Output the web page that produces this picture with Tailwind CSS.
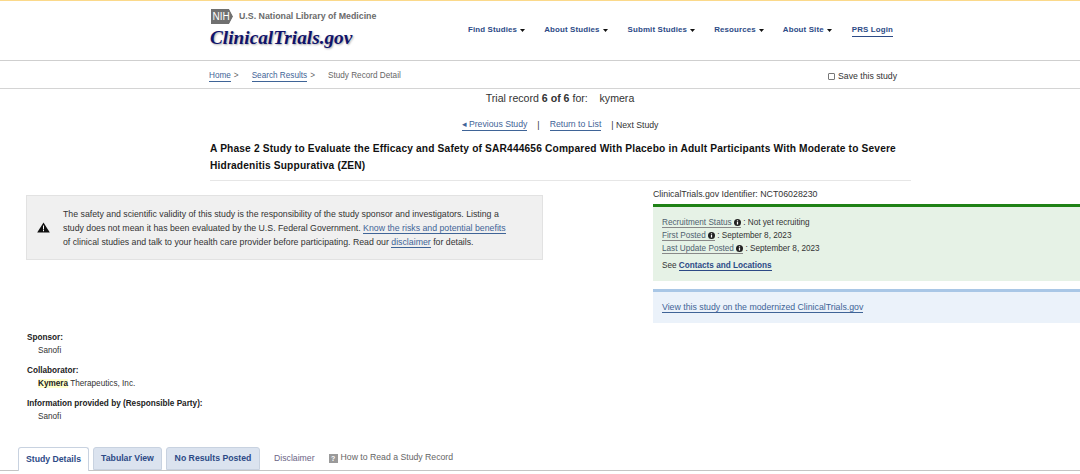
<!DOCTYPE html>
<html lang="en">
<head>
  <meta charset="UTF-8" />
  <title>ClinicalTrials.gov</title>
  <script src="https://cdn.jsdelivr.net/npm/@tailwindcss/browser@4"></script>
</head>
<body class="bg-white h-[474px] overflow-hidden font-['Liberation_Sans',Arial,sans-serif] text-[#333]">

  <!-- Header -->
  <header class="h-[61px] border-t-[1px] border-b border-t-[#fbd98a] border-b-[#cfcfcf] flex pl-[210px]">
    <div class="w-[258px] pt-[8px]">
      <div class="flex items-center h-[15px]">
        <svg width="24" height="15" viewBox="0 0 24 15">
          <path d="M1 0H19L23 7.5L19 15H1Z" fill="#707070"/>
          <path d="M19.8 0L23.8 7.5L19.8 15" fill="none" stroke="#fff" stroke-width="0.8"/>
          <text x="2.5" y="11.3" font-size="10" fill="#fff" font-family="Liberation Sans">NIH</text>
        </svg>
        <span class="ml-[5px] text-[8.8px] font-bold text-[#6b6b6b]">U.S. National Library of Medicine</span>
      </div>
      <div class="mt-[1px] font-['Liberation_Serif',serif] italic font-bold text-[19.3px] leading-[26px] text-[#10136b] [text-shadow:1px_1px_2px_#aaa]">ClinicalTrials.gov</div>
    </div>
    <nav class="flex items-start pt-[23px] text-[7.9px] leading-[12px] font-bold text-[#2c4a86] tracking-[0.15px]">
      <span class="flex items-center h-[12px]">Find Studies<svg class="ml-[3px]" width="5" height="3" viewBox="0 0 5 3"><path d="M0 0H5L2.5 3Z" fill="#111"/></svg></span>
      <span class="flex items-center h-[12px] ml-[19px]">About Studies<svg class="ml-[3px]" width="5" height="3" viewBox="0 0 5 3"><path d="M0 0H5L2.5 3Z" fill="#111"/></svg></span>
      <span class="flex items-center h-[12px] ml-[20px]">Submit Studies<svg class="ml-[3px]" width="5" height="3" viewBox="0 0 5 3"><path d="M0 0H5L2.5 3Z" fill="#111"/></svg></span>
      <span class="flex items-center h-[12px] ml-[19px]">Resources<svg class="ml-[3px]" width="5" height="3" viewBox="0 0 5 3"><path d="M0 0H5L2.5 3Z" fill="#111"/></svg></span>
      <span class="flex items-center h-[12px] ml-[19px]">About Site<svg class="ml-[3px]" width="5" height="3" viewBox="0 0 5 3"><path d="M0 0H5L2.5 3Z" fill="#111"/></svg></span>
      <a class="ml-[20px] border-b border-[#2c4a86]">PRS Login</a>
    </nav>
  </header>

  <!-- Breadcrumb -->
  <div class="h-[28px] pt-[4px] border-b border-[#d4d4d4] flex items-center pl-[209px] pr-[183px] text-[8.2px] text-[#666]">
    <a class="text-[#3f6497] border-b border-[#3f6497] leading-[10px]">Home</a><span class="ml-[3px]">&gt;</span>
    <a class="ml-[13px] text-[#3f6497] border-b border-[#3f6497] leading-[10px]">Search Results</a><span class="ml-[3px]">&gt;</span>
    <span class="ml-[13px]">Study Record Detail</span>
    <label class="ml-auto flex items-center text-[8.7px] text-[#333]">
      <span class="w-[7px] h-[7px] border border-[#777] rounded-[1px] mr-[3px]"></span>Save this study
    </label>
  </div>

  <!-- Record heading -->
  <p class="mt-[2px] text-center text-[10.6px] leading-[14px] pl-[40px]">Trial record <b>6 of 6</b> for: &nbsp; &nbsp;kymera</p>
  <div class="mt-[14px] flex justify-center pl-[40px] text-[8.7px] leading-[12px]">
    <a class="text-[#3f6497] border-b border-[#3f6497] leading-[10px]">◂ Previous Study</a>
    <span class="ml-[10px]">|</span>
    <a class="ml-[10px] text-[#3f6497] border-b border-[#3f6497] leading-[10px]">Return to List</a>
    <span class="ml-[10px]">| Next Study</span>
  </div>
  <h1 class="mt-[9px] mx-[210px] w-[701px] pb-[6px] border-b border-[#e6e6e6] text-[10.2px] leading-[17px] font-bold text-[#111] tracking-[0.16px]">A Phase 2 Study to Evaluate the Efficacy and Safety of SAR444656 Compared With Placebo in Adult Participants With Moderate to Severe Hidradenitis Suppurativa (ZEN)</h1>

  <!-- Two columns -->
  <div class="flex mt-[7px]">
    <div class="ml-[26px] w-[517px] mt-[7px]">
      <div class="h-[65px] bg-[#f0f0f0] border border-[#e2e2e2] flex items-center text-[8.75px] leading-[14px]">
        <svg class="ml-[10px] shrink-0" width="13" height="11" viewBox="0 0 13 11"><path d="M6.5 0.5L12.8 10.6H0.2Z" fill="#111"/><path d="M6 3.6h1v3.8H6zM6 8.1h1v1.1H6z" fill="#fff"/></svg>
        <p class="ml-[13px] w-[446px]">The safety and scientific validity of this study is the responsibility of the study sponsor and investigators. Listing a study does not mean it has been evaluated by the U.S. Federal Government. <a class="text-[#3f6497] border-b border-[#3f6497]">Know the risks and potential benefits</a> of clinical studies and talk to your health care provider before participating. Read our <a class="text-[#3f6497] border-b border-[#3f6497]">disclaimer</a> for details.</p>
      </div>
    </div>
    <div class="ml-[110px] flex-1">
      <p class="text-[8.8px] leading-[12px]">ClinicalTrials.gov Identifier: NCT06028230</p>
      <div class="mt-[4px] h-[77px] bg-[#e6f2e6] border-t-[3px] border-[#1f8216] pl-[9px] pt-[9px] text-[8.2px] leading-[13px]">
        <div><span class="border-b border-[#888] text-[#4f5f6f]">Recruitment Status <svg class="inline w-[7px] h-[7px] align-[-1px]" viewBox="0 0 8 8"><circle cx="4" cy="4" r="4" fill="#222"/><rect x="3.3" y="3.3" width="1.4" height="3" fill="#fff"/><rect x="3.3" y="1.5" width="1.4" height="1.2" fill="#fff"/></svg></span> : Not yet recruiting</div>
        <div><span class="border-b border-[#888] text-[#4f5f6f]">First Posted <svg class="inline w-[7px] h-[7px] align-[-1px]" viewBox="0 0 8 8"><circle cx="4" cy="4" r="4" fill="#222"/><rect x="3.3" y="3.3" width="1.4" height="3" fill="#fff"/><rect x="3.3" y="1.5" width="1.4" height="1.2" fill="#fff"/></svg></span> : September 8, 2023</div>
        <div><span class="border-b border-[#888] text-[#4f5f6f]">Last Update Posted <svg class="inline w-[7px] h-[7px] align-[-1px]" viewBox="0 0 8 8"><circle cx="4" cy="4" r="4" fill="#222"/><rect x="3.3" y="3.3" width="1.4" height="3" fill="#fff"/><rect x="3.3" y="1.5" width="1.4" height="1.2" fill="#fff"/></svg></span> : September 8, 2023</div>
        <div class="mt-[4px]">See <a class="font-bold text-[#2c4a86] border-b border-[#2c4a86]">Contacts and Locations</a></div>
      </div>
      <div class="mt-[8px] h-[34px] bg-[#ebf2fa] border-t-[3px] border-[#a9c7e6] pl-[9px] pt-[9px] text-[8.75px] leading-[12px]">
        <a class="text-[#3f6497] border-b border-[#3f6497]">View this study on the modernized ClinicalTrials.gov</a>
      </div>
    </div>
  </div>

  <!-- Sponsor info -->
  <dl class="mt-[8px] ml-[27px] text-[8.2px] leading-[13px]">
    <dt class="font-bold text-[#222]">Sponsor:</dt>
    <dd class="ml-[11px]">Sanofi</dd>
    <dt class="mt-[7px] font-bold text-[#222]">Collaborator:</dt>
    <dd class="ml-[11px]"><b class="bg-[#ffffcc] text-[#222]">Kymera</b> Therapeutics, Inc.</dd>
    <dt class="mt-[7px] font-bold text-[#222]">Information provided by (Responsible Party):</dt>
    <dd class="ml-[11px]">Sanofi</dd>
  </dl>

  <!-- Tabs -->
  <div class="mt-[24px] h-[24px] border-b border-[#c4c4c4] flex pl-[18px] text-[8.7px]">
    <div class="w-[71px] h-[24px] bg-white border border-b-0 border-[#c8d2e0] rounded-t-[3px] flex items-center justify-center font-bold text-[#2c4a86]">Study Details</div>
    <div class="ml-[4px] w-[69px] h-[23px] bg-[#dbe3ef] border border-[#c8d2e0] rounded-t-[3px] flex items-center justify-center font-bold text-[#2c4a86]">Tabular View</div>
    <div class="ml-[4px] w-[94px] h-[23px] bg-[#dbe3ef] border border-[#c8d2e0] rounded-t-[3px] flex items-center justify-center font-bold text-[#2c4a86]">No Results Posted</div>
    <span class="ml-[14px] mt-[5px] text-[#6b6485] leading-[12px]">Disclaimer</span>
    <span class="ml-[14px] mt-[5px] flex items-center h-[12px] text-[#666]"><i class="not-italic w-[9px] h-[9px] mr-[3px] bg-[#9a9a9a] text-white text-[7px] leading-[9px] text-center font-bold">?</i>How to Read a Study Record</span>
  </div>
</body>
</html>
